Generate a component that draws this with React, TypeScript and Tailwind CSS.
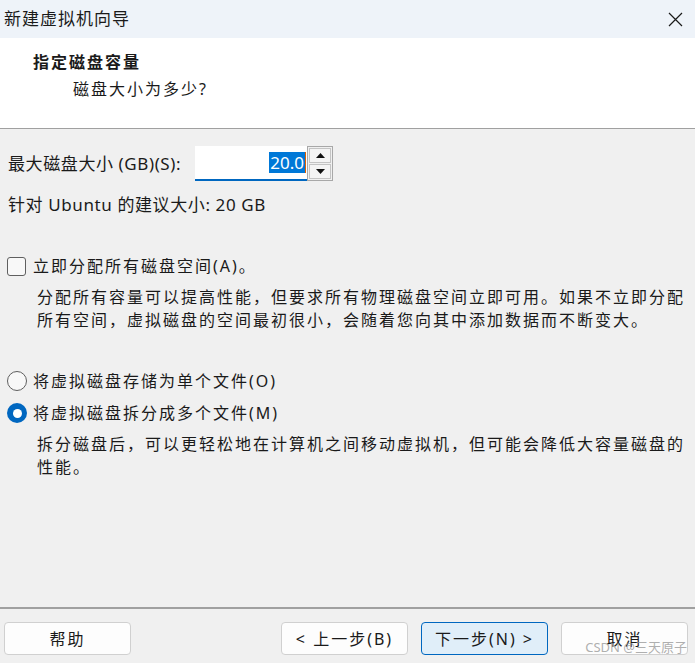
import React from 'react';

const body = '"Noto Sans", "Noto Sans CJK SC", sans-serif';

const Btn = ({ children, primary }: { children: React.ReactNode; primary?: boolean }) => (
  <div
    className={`w-[127px] h-[33px] rounded-[4px] border flex items-center justify-center text-[16px] tracking-[2px] text-[#1a1a1a] ${
      primary ? 'bg-[#e0eef9] border-[#0067c0]' : 'bg-[#fdfdfd] border-[#d0d0d0]'
    }`}
  >
    {children}
  </div>
);

export default function App() {
  return (
    <div className="w-[695px] h-[663px] bg-[#f0f0f0] flex flex-col relative text-[#1a1a1a]" style={{ fontFamily: body }}>
      {/* Title bar */}
      <div className="h-[38px] bg-[#eef3f9] flex items-center justify-between pl-[4px] pr-[12px]">
        <span className="text-[17px] tracking-[1px]">新建虚拟机向导</span>
        <svg width="15" height="15" viewBox="0 0 15 15" stroke="#1a1a1a" strokeWidth="1.2">
          <path d="M1 1L14 14M14 1L1 14" />
        </svg>
      </div>

      {/* Header */}
      <div className="h-[91px] bg-white border-b border-[#a0a0a0] pt-[12px] pl-[33px]">
        <div className="text-[16px] leading-[24px] font-bold tracking-[2px]">指定磁盘容量</div>
        <div className="text-[16px] leading-[24px] tracking-[2px] pl-[40px] mt-[3px]">磁盘大小为多少?</div>
      </div>

      {/* Main */}
      <div className="flex-1 px-[8px]">
        <div className="mt-[17px] h-[35px] flex items-center">
          <span className="text-[17px] tracking-[0.6px]">最大磁盘大小 (GB)(S):</span>
          <div className="ml-auto mr-[354px] flex">
            <div className="w-[112px] h-[35px] bg-white border-b-2 border-[#0067c0] flex items-center justify-end">
              <span className="bg-[#0078d7] text-white text-[17px] leading-[21px] px-[1px]">20.0</span>
              <span className="w-[1px] h-[21px] bg-[#e06000] mr-[1px]" />
            </div>
            <div className="w-[26px] h-[35px] border border-[#a8a8a8] flex flex-col p-[1px] gap-[1px] bg-[#f0f0f0]">
              <div className="flex-1 border border-[#c4c4c4] bg-[#f4f4f4] flex items-center justify-center">
                <svg width="9" height="5" viewBox="0 0 9 5"><path d="M4.5 0L9 5H0z" fill="#111" /></svg>
              </div>
              <div className="flex-1 border border-[#c4c4c4] bg-[#f4f4f4] flex items-center justify-center">
                <svg width="9" height="5" viewBox="0 0 9 5"><path d="M0 0H9L4.5 5z" fill="#111" /></svg>
              </div>
            </div>
          </div>
        </div>

        <div className="mt-[12px] h-[24px] flex items-center text-[17px] tracking-[0.6px]">
          针对 Ubuntu 的建议大小: 20 GB
        </div>

        <div className="mt-[37px] h-[24px] flex items-center">
          <div className="w-[19px] h-[19px] rounded-[3px] border border-[#5f5f5f] bg-[#f8f8f8] mr-[7px] ml-[-1px]" />
          <span className="text-[16px] tracking-[2px]">立即分配所有磁盘空间(A)。</span>
        </div>

        <div className="mt-[8px] pl-[29px] text-[16px] leading-[23px] tracking-[2px]">
          分配所有容量可以提高性能，但要求所有物理磁盘空间立即可用。如果不立即分配
          <br />
          所有空间，虚拟磁盘的空间最初很小，会随着您向其中添加数据而不断变大。
        </div>

        <div className="mt-[37px] h-[24px] flex items-center">
          <div className="w-[20px] h-[20px] rounded-full border border-[#5f5f5f] bg-[#f8f8f8] mr-[6px] ml-[-1px]" />
          <span className="text-[16px] tracking-[2px]">将虚拟磁盘存储为单个文件(O)</span>
        </div>

        <div className="mt-[8px] h-[24px] flex items-center">
          <div className="w-[20px] h-[20px] rounded-full bg-[#0067c0] flex items-center justify-center mr-[6px] ml-[-1px]">
            <div className="w-[9px] h-[9px] rounded-full bg-white" />
          </div>
          <span className="text-[16px] tracking-[2px]">将虚拟磁盘拆分成多个文件(M)</span>
        </div>

        <div className="mt-[8px] pl-[29px] text-[16px] leading-[23px] tracking-[2px]">
          拆分磁盘后，可以更轻松地在计算机之间移动虚拟机，但可能会降低大容量磁盘的
          <br />
          性能。
        </div>
      </div>

      {/* Footer */}
      <div className="h-[56px] border-t-2 border-[#a0a0a0] flex items-start pt-[13px] pl-[4px] pr-[7px]">
        <Btn>帮助</Btn>
        <div className="ml-auto flex gap-[13px]">
          <Btn>&lt; 上一步(B)</Btn>
          <Btn primary>下一步(N) &gt;</Btn>
          <Btn>取消</Btn>
        </div>
      </div>

      <div className="absolute right-[8px] bottom-[6px] text-[13px] text-[#9a9a9a]/80">CSDN @三天原子</div>
    </div>
  );
}
